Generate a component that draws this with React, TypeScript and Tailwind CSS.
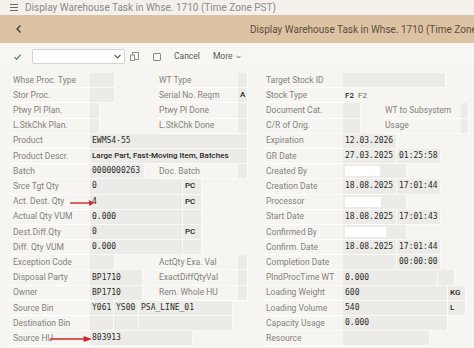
import React from 'react';

type CellProps = { w: string; children?: React.ReactNode };

// label cell in the form grid
const L = ({ w = 'w-[80px]', children }: Partial<CellProps>) => (
  <div
    className={`${w} flex h-full shrink-0 items-center overflow-hidden whitespace-nowrap border-b border-white pl-[3px] text-[8.5px] text-[#84817d]`}
  >
    {children}
  </div>
);

// grey value field
const V = ({ w, children }: CellProps) => (
  <div
    className={`${w} flex h-full shrink-0 items-center overflow-hidden whitespace-nowrap border-b border-r border-[#fbfaf8] bg-[#ecebe7] pl-[2px]`}
  >
    {children}
  </div>
);

const S = ({ w, children }: CellProps) => (
  <div className={`${w} flex h-full shrink-0 items-center whitespace-nowrap`}>{children}</div>
);

const M = ({ children }: { children: React.ReactNode }) => (
  <span className="font-['DejaVu_Sans_Mono',monospace] text-[8px] text-[#2b2b2b]">{children}</span>
);

const B = ({ children }: { children: React.ReactNode }) => (
  <span className="text-[8px] font-medium text-[#262626]">{children}</span>
);

const Blank = ({ w }: { w: string }) => (
  <V w="w-[64px]">
    <div className={`${w} h-[10px] bg-white`} />
  </V>
);

const Arrow = ({ from, to }: { from: string; to: string }) => (
  <svg className={`absolute top-[4px] ${from} ${to} h-[8px]`} viewBox="0 0 40 8" preserveAspectRatio="none">
    <line x1="0" y1="4" x2="34" y2="4" stroke="#d0262b" strokeWidth="1.4" />
    <polygon points="32,1 40,4 32,7" fill="#d0262b" />
  </svg>
);

const Row = ({ left, right, extra }: { left: React.ReactNode; right: React.ReactNode; extra?: React.ReactNode }) => (
  <div className="relative flex h-[15.2px]">
    <div className="flex w-[253px] shrink-0">{left}</div>
    <div className="flex">{right}</div>
    {extra}
  </div>
);

const Date2 = ({ d, t }: { d: string; t: string }) => (
  <>
    <V w="w-[54px]">
      <M>{d}</M>
    </V>
    <V w="w-[44px]">
      <M>{t}</M>
    </V>
  </>
);

export default function App() {
  const T = 'Display Warehouse Task in Whse. 1710 (Time Zone PST)';
  return (
    <div className="h-[348px] w-[474px] overflow-hidden bg-[#f7f5f1] font-['Roboto',sans-serif]">
      {/* shell header */}
      <div className="flex h-[15px] items-center bg-[#f4f1ec] pl-[10px]">
        <svg className="shrink-0" width="8" height="7" viewBox="0 0 8 7">
          <path d="M0 0.5H8M0 3.5H8M0 6.5H8" stroke="#6d6a66" strokeWidth="1" />
        </svg>
        <span className="ml-[7px] shrink-0 whitespace-nowrap text-[10px] text-[#8d8a86]">{T}</span>
      </div>
      <div className="flex h-[28px] items-center overflow-hidden bg-[#dcc3a4]">
        <svg className="ml-[16px] shrink-0" width="5" height="8" viewBox="0 0 5 8">
          <path d="M4.5 0.5L1 4L4.5 7.5" stroke="#3f3a34" strokeWidth="1.3" fill="none" />
        </svg>
        <span className="ml-[229px] shrink-0 whitespace-nowrap text-[10px] text-[#5d4d3b]">{T}</span>
      </div>
      {/* toolbar */}
      <div className="flex h-[27px] items-center bg-[#f8f6f2]">
        <svg className="ml-[14px] shrink-0" width="7" height="6" viewBox="0 0 7 6">
          <path d="M0.5 3.2L2.6 5.3L6.5 0.6" stroke="#3d8a3a" strokeWidth="1.2" fill="none" />
        </svg>
        <div className="ml-[11px] flex h-[15px] w-[93px] shrink-0 items-center justify-end rounded-[2px] border border-[#d6d3ce] bg-white pr-[3px]">
          <svg width="7" height="5" viewBox="0 0 7 5">
            <path d="M0.5 0.8L3.5 4L6.5 0.8" stroke="#555" strokeWidth="1.1" fill="none" />
          </svg>
        </div>
        <svg className="ml-[5px] shrink-0" width="9" height="9" viewBox="0 0 9 9">
          <rect x="2.5" y="0.5" width="6" height="7" fill="none" stroke="#8a8783" strokeWidth="0.9" />
          <rect x="0.5" y="3" width="4" height="5.5" fill="#f8f6f2" stroke="#8a8783" strokeWidth="0.9" />
        </svg>
        <div className="ml-[14px] h-[8px] w-[8px] shrink-0 rounded-[1px] border border-[#8a8783]" />
        <span className="ml-[13px] text-[8.5px] text-[#5a5855]">Cancel</span>
        <span className="ml-[13px] text-[8.5px] text-[#5a5855]">More</span>
        <svg className="ml-[4px] shrink-0" width="5" height="4" viewBox="0 0 5 4">
          <path d="M0.5 0.8L2.5 3L4.5 0.8" stroke="#666" strokeWidth="0.9" fill="none" />
        </svg>
      </div>

      {/* form */}
      <div className="mt-[3px] flex flex-col pl-[10px]">
        <Row
          left={<><L>Whse Proc. Type</L><V w="w-[25px]" /><S w="w-[41px]" /><L w="w-[82px]">WT Type</L><V w="w-[10px]" /></>}
          right={<><L>Target Stock ID</L><V w="w-[103px]" /></>}
        />
        <Row
          left={<><L>Stor Proc.</L><V w="w-[25px]" /><S w="w-[41px]" /><L w="w-[82px]">Serial No. Reqm</L><V w="w-[10px]"><B>A</B></V></>}
          right={<><L>Stock Type</L><S w="w-[60px]"><span className="pl-[2px] text-[8px] font-medium text-[#262626]">F2</span><span className="ml-[4px] text-[8px] text-[#6a6865]">F2</span></S></>}
        />
        <Row
          left={<><L>Ptwy Pl Plan.</L><V w="w-[10px]" /><S w="w-[56px]" /><L w="w-[82px]">Ptwy Pl Done</L><V w="w-[10px]" /></>}
          right={<><L>Document Cat.</L><V w="w-[18px]" /><S w="w-[21px]" /><L w="w-[79px]">WT to Subsystem</L><V w="w-[8px]" /></>}
        />
        <Row
          left={<><L>L.StkChk Plan.</L><V w="w-[10px]" /><S w="w-[56px]" /><L w="w-[82px]">L.StkChk Done</L><V w="w-[10px]" /></>}
          right={<><L>C/R of Orig.</L><V w="w-[18px]" /><S w="w-[21px]" /><L w="w-[79px]">Usage</L><V w="w-[8px]" /></>}
        />
        <Row
          left={<><L>Product</L><V w="w-[158px]"><M>EWMS4-55</M></V></>}
          right={<><L>Expiration</L><V w="w-[54px]"><M>12.03.2026</M></V></>}
        />
        <Row
          left={<><L>Product Descr.</L><V w="w-[158px]"><B>Large Part, Fast-Moving Item, Batches</B></V></>}
          right={<><L>GR Date</L><Date2 d="27.03.2025" t="01:25:58" /></>}
        />
        <Row
          left={<><L>Batch</L><V w="w-[55px]"><M>0000000263</M></V><S w="w-[11px]" /><L w="w-[82px]">Doc. Batch</L><V w="w-[10px]" /></>}
          right={<><L>Created By</L><Blank w="w-[35px]" /></>}
        />
        <Row
          left={<><L>Srce Tgt Qty</L><V w="w-[93px]"><M>0</M></V><V w="w-[19px]"><B>PC</B></V></>}
          right={<><L>Creation Date</L><Date2 d="18.08.2025" t="17:01:44" /></>}
        />
        <Row
          left={<><L>Act. Dest. Qty</L><V w="w-[93px]"><M>4</M></V><V w="w-[19px]"><B>PC</B></V></>}
          right={<><L>Processor</L><Blank w="w-[36px]" /></>}
          extra={<Arrow from="left-[60px]" to="w-[24px]" />}
        />
        <Row
          left={<><L>Actual Qty VUM</L><V w="w-[93px]"><M>0.000</M></V><V w="w-[19px]" /></>}
          right={<><L>Start Date</L><Date2 d="18.08.2025" t="17:01:43" /></>}
        />
        <Row
          left={<><L>Dest.Diff.Qty</L><V w="w-[93px]"><M>0</M></V><V w="w-[19px]"><B>PC</B></V></>}
          right={<><L>Confirmed By</L><Blank w="w-[41px]" /></>}
        />
        <Row
          left={<><L>Diff. Qty VUM</L><V w="w-[93px]"><M>0.000</M></V><V w="w-[19px]" /></>}
          right={<><L>Confirm. Date</L><Date2 d="18.08.2025" t="17:01:44" /></>}
        />
        <Row
          left={<><L>Exception Code</L><V w="w-[25px]" /><S w="w-[41px]" /><L w="w-[82px]">ActQty Exa. Val</L><V w="w-[10px]" /></>}
          right={<><L>Completion Date</L><V w="w-[54px]" /><V w="w-[44px]"><M>00:00:00</M></V></>}
        />
        <Row
          left={<><L>Disposal Party</L><V w="w-[53px]"><M>BP1710</M></V><S w="w-[13px]" /><L w="w-[82px]">ExactDiffQtyVal</L><V w="w-[10px]" /></>}
          right={<><L>PlndProcTime WT</L><V w="w-[95px]"><M>0.000</M></V><V w="w-[17px]" /></>}
        />
        <Row
          left={<><L>Owner</L><V w="w-[53px]"><M>BP1710</M></V><S w="w-[13px]" /><L w="w-[82px]">Rem. Whole HU</L><V w="w-[10px]" /></>}
          right={<><L>Loading Weight</L><V w="w-[105px]"><M>600</M></V><V w="w-[18px]"><B>KG</B></V></>}
        />
        <Row
          left={<><L>Source Bin</L><V w="w-[24px]"><M>Y061</M></V><V w="w-[25px]"><M>YS00</M></V><V w="w-[94px]"><M>PSA_LINE_01</M></V></>}
          right={<><L>Loading Volume</L><V w="w-[105px]"><M>540</M></V><V w="w-[18px]"><B>L</B></V></>}
        />
        <Row
          left={<><L>Destination Bin</L><V w="w-[24px]" /><V w="w-[25px]" /><V w="w-[94px]" /></>}
          right={<><L>Capacity Usage</L><V w="w-[105px]"><M>0.000</M></V></>}
        />
        <Row
          left={<><L>Source HU</L><V w="w-[103px]"><M>803913</M></V></>}
          right={<><L>Resource</L><V w="w-[87px]" /></>}
          extra={<Arrow from="left-[40px]" to="w-[42px]" />}
        />
      </div>
    </div>
  );
}
